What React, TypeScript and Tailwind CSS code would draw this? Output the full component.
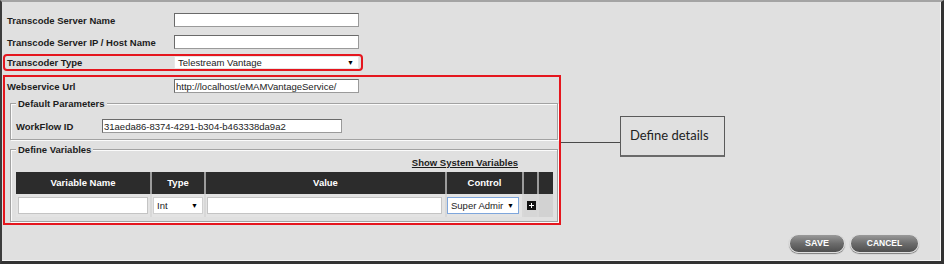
import React from "react";

const Arrow = () => (
  <span className="text-[7px] leading-none text-black">▼</span>
);

function Field({ label, value, labelW = "w-[167px]" }: { label: string; value?: string; labelW?: string }) {
  return (
    <div className="flex items-center h-[14px]">
      <div className={`${labelW} shrink-0 text-[9.5px] font-bold leading-[11px] whitespace-nowrap`}>{label}</div>
      <input
        readOnly
        value={value ?? ""}
        className="w-[185px] h-[14px] bg-white border border-[#6a6a6a] border-r-[#9a9a9a] border-b-[#9a9a9a] px-[1px] text-[9.5px] leading-[12px] text-[#222] outline-none"
      />
    </div>
  );
}

export default function App() {
  return (
    <div className="w-[944px] h-[264px] overflow-hidden bg-[#e0e0e0] border-l-2 border-t-2 border-r-[3px] border-b-[3px] border-l-[#3c3c3c] border-t-[#a4a4a4] border-r-[#333] border-b-[#333] font-['Liberation_Sans',Arial,sans-serif] text-[#1c1c1c]">
      <div className="h-full border-r border-b border-[#f4f4f4] pl-px pt-[11px]">
        <div className="pl-[4px]">
          <Field label="Transcode Server Name" />
          <div className="mt-[8px]">
            <Field label="Transcode Server IP / Host Name" />
          </div>
        </div>

        <div className="mt-[5px] w-[360px] h-[17px] border-2 border-[#e5161e] rounded-[4px] flex items-center pl-[2px]">
          <div className="w-[167px] shrink-0 text-[9.5px] font-bold leading-[11px]">Transcoder Type</div>
          <div className="w-[185px] h-[13px] bg-white border border-[#e6e6e6] flex items-center justify-between pl-[3px] pr-[4px]">
            <span className="text-[9.5px] leading-[11px] text-[#222]">Telestream Vantage</span>
            <Arrow />
          </div>
        </div>

        <div className="flex items-start mt-[4px]">
          <div className="w-[558px] h-[150px] shrink-0 border-2 border-[#e5161e]">
            <div className="mt-[2px] pl-[2px]">
              <Field label="Webservice Url" value="http://localhost/eMAMVantageService/" />
            </div>

            <fieldset className="mt-[5px] ml-[5px] mr-[1px] border border-[#a2a2a2] shadow-[inset_1px_1px_0_#fbfbfb,1px_1px_0_#fbfbfb] px-[5px] pb-[6px]">
              <legend className="px-[2px] bg-[#e0e0e0] text-[9.5px] font-bold leading-[11px]">Default Parameters</legend>
              <div className="mt-[10px] flex items-center h-[14px]">
                <div className="w-[86px] shrink-0 text-[9.5px] font-bold leading-[11px]">WorkFlow ID</div>
                <input
                  readOnly
                  value="31aeda86-8374-4291-b304-b463338da9a2"
                  className="w-[240px] h-[14px] bg-white border border-[#6a6a6a] border-r-[#9a9a9a] border-b-[#9a9a9a] px-[1px] text-[9.5px] leading-[12px] text-[#222] outline-none"
                />
              </div>
            </fieldset>

            <fieldset className="mt-[4px] ml-[5px] mr-[1px] border border-[#a2a2a2] shadow-[inset_1px_1px_0_#fbfbfb,1px_1px_0_#fbfbfb] pl-[5px] pr-[4px] pb-[4px]">
              <legend className="px-[2px] bg-[#e0e0e0] text-[9.5px] font-bold leading-[11px]">Define Variables</legend>
              <div className="mt-[2px] flex justify-end pr-[35px]">
                <span className="text-[9.5px] font-bold leading-[11px] underline">Show System Variables</span>
              </div>
              <div className="mt-[4px]">
                <div className="grid grid-cols-[134px_52px_239px_75px_13px_14px] gap-x-[2px] bg-[#9c9c9c]">
                  {["Variable Name", "Type", "Value", "Control", "", ""].map((h, i) => (
                    <div key={i} className="h-[22px] bg-[#2c2c2c] text-white text-[9.5px] font-bold flex items-center justify-center">
                      {h}
                    </div>
                  ))}
                </div>
                <div className="grid grid-cols-[134px_52px_239px_75px_13px_14px] gap-x-[2px] bg-[#d8d8d8] h-[23px]">
                  <div className="bg-[#e3e3e3] px-[2px] py-[3px]">
                    <div className="h-[17px] bg-white border border-[#c4c4c4]" />
                  </div>
                  <div className="bg-[#e3e3e3] px-[1px] py-[3px]">
                    <div className="h-[17px] bg-white border border-[#cfcfcf] flex items-center justify-between pl-[3px] pr-[4px]">
                      <span className="text-[9.5px] leading-[11px] text-[#222]">Int</span>
                      <Arrow />
                    </div>
                  </div>
                  <div className="bg-[#e3e3e3] pl-[1px] pr-[3px] py-[3px]">
                    <div className="h-[17px] bg-white border border-[#c4c4c4]" />
                  </div>
                  <div className="bg-[#e3e3e3] pr-[3px] py-[3px]">
                    <div className="h-[17px] bg-white border border-[#7ea6dc] flex items-center justify-between pl-[3px] pr-[4px] overflow-hidden">
                      <span className="text-[9.5px] leading-[11px] text-[#222] whitespace-nowrap">Super Admir</span>
                      <Arrow />
                    </div>
                  </div>
                  <div className="bg-[#d6d6d6] flex items-center pl-[3px]">
                    <div className="w-[9px] h-[9px] bg-[#111] flex items-center justify-center relative">
                      <div className="w-[5px] h-px bg-white absolute" />
                      <div className="w-px h-[5px] bg-white absolute" />
                    </div>
                  </div>
                  <div className="bg-[#d2d2d2]" />
                </div>
              </div>
            </fieldset>
          </div>

          <div className="flex items-start mt-[41px]">
            <div className="w-[59px] h-px bg-[#4a4a4a] mt-[26px]" />
            <div className="w-[105px] h-[41px] border border-[#5a5a5a] border-b-2 border-b-[#6a6a6a] flex items-center pl-[9px] font-['Lato','Open_Sans',sans-serif] text-[13px] text-[#222]">
              Define details
            </div>
          </div>
        </div>

        <div className="mt-[9px] flex justify-end gap-[5px] pr-[21px]">
          <button className="w-[56px] h-[19px] rounded-full border border-[#dedede] bg-linear-to-b from-[#9a9a9a] via-[#6c6c6c] to-[#4e4e4e] shadow-[0_1px_1px_rgba(0,0,0,0.45)] text-white text-[9px] font-bold leading-none">
            SAVE
          </button>
          <button className="w-[69px] h-[19px] rounded-full border border-[#dedede] bg-linear-to-b from-[#9a9a9a] via-[#6c6c6c] to-[#4e4e4e] shadow-[0_1px_1px_rgba(0,0,0,0.45)] text-white text-[8.5px] font-bold leading-none">
            CANCEL
          </button>
        </div>
      </div>
    </div>
  );
}
